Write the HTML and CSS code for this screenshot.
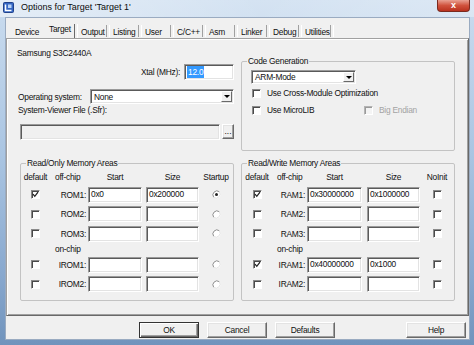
FILE: index.html
```html
<!DOCTYPE html>
<html lang="en">
<head>
<meta charset="utf-8">
<title>Options for Target 'Target 1'</title>
<link rel="stylesheet" href="styles.css">
</head>
<body>
<div class="win">
	<div class="titlebar">
		<svg class="appicon" width="11" height="11" viewBox="0 0 11 11"><rect x="0.5" y="0.5" width="10" height="10" rx="1" fill="#3567c4" stroke="#1f418a"/><path d="M2.5 2.5V8.5H8.5" fill="none" stroke="#fff" stroke-width="1.5"/><rect x="5" y="2.5" width="3.5" height="3.5" fill="#b9d3f5"/></svg>
		<span class="caption">Options for Target 'Target 1'</span>
		<div class="close">x</div>
	</div>
	<div class="client">
		<div class="tabs">
			<div class="tab first"><span>Device</span></div>
			<div class="tab sel"><span>Target</span></div>
			<div class="tab"><span>Output</span></div>
			<div class="tab"><span>Listing</span></div>
			<div class="tab"><span>User</span></div>
			<div class="tab"><span>C/C++</span></div>
			<div class="tab"><span>Asm</span></div>
			<div class="tab"><span>Linker</span></div>
			<div class="tab"><span>Debug</span></div>
			<div class="tab"><span>Utilities</span></div>
		</div>
		<div class="page">
			<div class="chip">Samsung S3C2440A</div>
			<div class="cols top">
				<div class="leftcol">
					<div class="xtal"><span>Xtal (MHz):</span><span class="edit xt"><span class="hl">12.0</span></span></div>
					<div class="os"><span>Operating system:</span><div class="combo oscombo"><span>None</span><span class="drop"></span></div></div>
					<div class="sfrlabel">System-Viewer File (.Sfr):</div>
					<div class="sfr"><span class="edit dis"></span><span class="btn dots">...</span></div>
				</div>
				<fieldset class="grp codegen">
					<legend>Code Generation</legend>
					<div class="cg">
						<div class="combo arm"><span>ARM-Mode</span><span class="drop"></span></div>
						<div class="opt"><span class="cb"></span><span>Use Cross-Module Optimization</span></div>
						<div class="opt two">
							<span class="pair"><span class="cb"></span><span>Use MicroLIB</span></span>
							<span class="pair off"><span class="cb"></span><span>Big Endian</span></span>
						</div>
					</div>
				</fieldset>
			</div>
			<div class="cols bottom">
				<fieldset class="grp mem rom">
					<legend>Read/Only Memory Areas</legend>
					<div class="grid">
						<span class="h">default</span><span class="h l">off-chip</span><span class="h st">Start</span><span class="h">Size</span><span class="h">Startup</span>

						<span class="cb on"><svg width="7" height="7" viewBox="0 0 7 7"><path d="M1 3.2L2.8 5.3L6 1.2" fill="none" stroke="#222" stroke-width="1.3"/></svg></span>
						<span class="lbl">ROM1:</span><span class="edit st">0x0</span><span class="edit">0x200000</span>
						<span class="rb"><svg width="9" height="9" viewBox="0 0 9 9"><circle cx="4.5" cy="4.5" r="4" fill="#fff"/><path d="M7.3 1.7A4 4 0 0 0 1.7 7.3" fill="none" stroke="#8a8a8a"/><path d="M1.7 7.3A4 4 0 0 0 7.3 1.7" fill="none" stroke="#e2e2e2"/><circle cx="4.5" cy="4.5" r="1.5" fill="#222"/></svg></span>

						<span class="cb"></span>
						<span class="lbl">ROM2:</span><span class="edit st"></span><span class="edit"></span>
						<span class="rb"><svg width="9" height="9" viewBox="0 0 9 9"><circle cx="4.5" cy="4.5" r="4" fill="#fff"/><path d="M7.3 1.7A4 4 0 0 0 1.7 7.3" fill="none" stroke="#8a8a8a"/><path d="M1.7 7.3A4 4 0 0 0 7.3 1.7" fill="none" stroke="#e2e2e2"/></svg></span>

						<span class="cb"></span>
						<span class="lbl">ROM3:</span><span class="edit st"></span><span class="edit"></span>
						<span class="rb"><svg width="9" height="9" viewBox="0 0 9 9"><circle cx="4.5" cy="4.5" r="4" fill="#fff"/><path d="M7.3 1.7A4 4 0 0 0 1.7 7.3" fill="none" stroke="#8a8a8a"/><path d="M1.7 7.3A4 4 0 0 0 7.3 1.7" fill="none" stroke="#e2e2e2"/></svg></span>

						<span class="sub">on-chip</span>

						<span class="cb"></span>
						<span class="lbl">IROM1:</span><span class="edit st"></span><span class="edit"></span>
						<span class="rb"><svg width="9" height="9" viewBox="0 0 9 9"><circle cx="4.5" cy="4.5" r="4" fill="#fff"/><path d="M7.3 1.7A4 4 0 0 0 1.7 7.3" fill="none" stroke="#8a8a8a"/><path d="M1.7 7.3A4 4 0 0 0 7.3 1.7" fill="none" stroke="#e2e2e2"/></svg></span>

						<span class="cb"></span>
						<span class="lbl">IROM2:</span><span class="edit st"></span><span class="edit"></span>
						<span class="rb"><svg width="9" height="9" viewBox="0 0 9 9"><circle cx="4.5" cy="4.5" r="4" fill="#fff"/><path d="M7.3 1.7A4 4 0 0 0 1.7 7.3" fill="none" stroke="#8a8a8a"/><path d="M1.7 7.3A4 4 0 0 0 7.3 1.7" fill="none" stroke="#e2e2e2"/></svg></span>
					</div>
				</fieldset>
				<fieldset class="grp mem ram">
					<legend>Read/Write Memory Areas</legend>
					<div class="grid">
						<span class="h">default</span><span class="h l">off-chip</span><span class="h st">Start</span><span class="h">Size</span><span class="h">NoInit</span>

						<span class="cb on"><svg width="7" height="7" viewBox="0 0 7 7"><path d="M1 3.2L2.8 5.3L6 1.2" fill="none" stroke="#222" stroke-width="1.3"/></svg></span>
						<span class="lbl">RAM1:</span><span class="edit st">0x30000000</span><span class="edit">0x1000000</span><span class="cb"></span>

						<span class="cb"></span>
						<span class="lbl">RAM2:</span><span class="edit st"></span><span class="edit"></span><span class="cb"></span>

						<span class="cb"></span>
						<span class="lbl">RAM3:</span><span class="edit st"></span><span class="edit"></span><span class="cb"></span>

						<span class="sub">on-chip</span>

						<span class="cb on"><svg width="7" height="7" viewBox="0 0 7 7"><path d="M1 3.2L2.8 5.3L6 1.2" fill="none" stroke="#222" stroke-width="1.3"/></svg></span>
						<span class="lbl">IRAM1:</span><span class="edit st">0x40000000</span><span class="edit">0x1000</span><span class="cb"></span>

						<span class="cb"></span>
						<span class="lbl">IRAM2:</span><span class="edit st"></span><span class="edit"></span><span class="cb"></span>
					</div>
				</fieldset>
			</div>
		</div>
		<div class="buttons">
			<span class="btn def">OK</span>
			<span class="btn">Cancel</span>
			<span class="btn">Defaults</span>
			<span class="btn help">Help</span>
		</div>
	</div>
</div>
</body>
</html>
```
FILE: styles.css
```css
* {box-sizing:border-box;}
html, body {margin:0;}
body {
	width:474px; height:345px; overflow:hidden;
	background:linear-gradient(180deg, #cadcef 0%, #aac5e2 45%, #88a8ce 80%, #7093bc 100%);
	font:8.4px/10px "Liberation Sans", Arial, sans-serif;
	letter-spacing:-0.25px;
	color:#111;
}
.win {display:flex; flex-direction:column; height:345px;}

/* title bar */
.titlebar {height:17px; display:flex; align-items:flex-start;
	background:linear-gradient(90deg, rgba(255,255,255,.5), rgba(255,255,255,.2) 55%, rgba(255,255,255,.35));}
.appicon {margin:2px 0 0 3px;}
.caption {font-size:9px; line-height:10px; letter-spacing:0; margin:2px 0 0 7px; color:#0c0c0c;}
.close {margin-left:auto; margin-right:4px; width:33px; height:12px;
	border:1px solid #7b2a1f; border-top:none; border-radius:0 0 4px 4px;
	background:linear-gradient(180deg, #e9a192, #d0523d 50%, #b9321f);
	color:#fff; font:bold 9px/10px "Liberation Sans", Arial, sans-serif; text-align:center;}

/* client area */
.client {flex:1; margin:0 4px 5px 5px; background:#f0f0f0;
	border:1px solid #9aabc1;}
.tabs {display:flex; height:16px; margin-top:4px; padding-left:4px;}
.tab {width:32px; display:flex; justify-content:space-between; align-items:flex-start; padding-left:3px;}
.tab span {margin-top:5px; white-space:nowrap;}
.tab::after {content:""; width:2px; height:12px; margin-top:3px;
	border-left:1px solid #a0a0a0; border-right:1px solid #fff;}
.tab.first {width:36px; padding-left:5px;}
.tab.first::after {display:none;}
.tab.sel span {margin-top:2px;}
.tab.sel::after {border-left-color:#696969; height:14px; margin-top:2px;}

.page {height:278px; padding:9px 0 0 10px;
	border:1px solid; border-color:#a0a0a0 #696969 #696969 #a0a0a0;
	box-shadow:inset 1px 1px #fff, inset -1px -1px #a0a0a0;}
.chip {height:10px;}
.cols {display:grid; grid-template-columns:217px 214px; column-gap:7px;}
.bottom {margin-top:7px;}

/* controls */
.edit {display:block; height:16px; background:#fff; padding-left:2px; line-height:12px; white-space:nowrap;
	border:1px solid; border-color:#9a9a9a #fff #fff #9a9a9a;
	box-shadow:inset 1px 1px #5a5a5a, inset -1px -1px #e3e3e3;}
.edit.dis {background:#f0f0f0;}
.hl {display:inline-block; margin-top:1px; background:#3399ff; color:#fff; padding:0 1px;}
.combo {display:flex; align-items:stretch; background:#fff; padding-left:3px;
	border:1px solid; border-color:#9a9a9a #fff #fff #9a9a9a;
	box-shadow:inset 1px 1px #5a5a5a, inset -1px -1px #e3e3e3;}
.combo > span:first-child {align-self:center;}
.drop {margin:1px 1px 1px auto; width:11px; display:flex; align-items:center; justify-content:center;
	background:#f0f0f0; border:1px solid; border-color:#fff #696969 #696969 #fff;}
.drop::after {content:""; border-left:3px solid transparent; border-right:3px solid transparent; border-top:3px solid #000;}
.btn {display:flex; align-items:center; justify-content:center; background:#f0f0f0;
	border:1px solid; border-color:#fff #696969 #696969 #fff;
	box-shadow:inset -1px -1px #a0a0a0, inset 1px 1px #e3e3e3;}
.cb {display:inline-flex; align-items:center; justify-content:center; width:9px; height:9px; background:#fff; flex:none;
	border:1px solid; border-color:#8a8a8a #fff #fff #8a8a8a;
	box-shadow:inset 1px 1px #4a4a4a;}
.rb {display:flex; justify-self:center;}

/* left column */
.leftcol {padding-top:6px;}
.xtal {display:flex; justify-content:flex-end; align-items:center; gap:4px; height:16px;}
.xt {width:50px;}
.os {display:flex; justify-content:space-between; align-items:center; margin-top:9px; height:15px; padding-left:1px;}
.oscombo {width:144px; height:15px;}
.sfrlabel {margin-top:1px; padding-left:1px;}
.sfr {display:flex; gap:2px; margin-top:9px; padding-left:3px;}
.sfr .edit {width:200px;}
.dots {width:12px; height:15px; line-height:8px; align-items:flex-end; padding-bottom:3px; letter-spacing:0;}

/* group boxes */
.grp {margin:0; padding:0; min-width:0; border:1px solid #c3c3c3; border-radius:2px;}
.grp legend {margin-left:5px; padding:0 1px; line-height:10px;}
.codegen {margin-top:-2px; height:95px;}
.cg {padding:4px 0 0 9px;}
.arm {width:105px; height:14px;}
.opt {display:flex; align-items:center; gap:6px; height:10px; margin:4px 0 0 1px;}
.opt.two {display:grid; grid-template-columns:106px auto; margin-top:7px;}
.pair {display:flex; align-items:center; gap:6px;}
.pair.off {color:#a3a3a3;}
.pair.off .cb {background:#f4f4f4; border-color:#b4b4b4 #fff #fff #b4b4b4; box-shadow:inset 1px 1px #9a9a9a;}

.mem {height:143px;}
.rom {margin-left:3px;}
.grid {display:grid; padding-top:3px; row-gap:3.5px; align-items:center;
	grid-template-rows:12px 16px 16px 16px 8px 16px 16px;}
.rom .grid {grid-template-columns:29px 38px 58px 53px 1fr;}
.ram .grid {grid-template-columns:30px 35px 60px 53px 1fr;}
.rom .st {width:54px;}
.ram .st {width:55px;}
.grid .cb {justify-self:center;}
.h {text-align:center; line-height:12px; white-space:nowrap;}
.h.l {text-align:left; padding-left:5px;}
.lbl {text-align:right; padding-right:2px;}
.sub {grid-column:2 / -1; padding-left:5px;}

/* bottom buttons */
.buttons {display:flex; gap:8px; margin-top:6px; padding:0 3px 0 133px;}
.buttons .btn {width:60px; height:16px;}
.btn.def {border-color:#333; box-shadow:inset 1px 1px #fff, inset -1px -1px #696969, inset -2px -2px #a0a0a0;}
.btn.help {margin-left:auto;}
```
